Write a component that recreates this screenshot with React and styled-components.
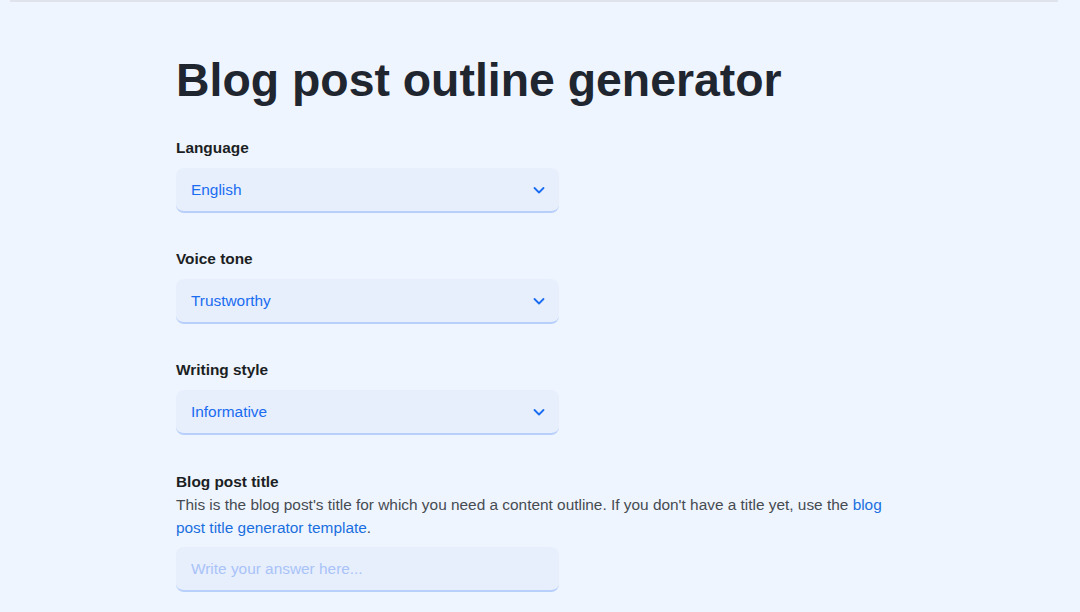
import styled, { createGlobalStyle } from 'styled-components'

const GlobalStyle = createGlobalStyle`
  html, body {
    margin: 0;
    padding: 0;
    background: #eff5fe;
  }
  body {
    font-family: "Liberation Sans", Arial, sans-serif;
    color: #1d232b;
  }
`

const Page = styled.div`
  min-height: 612px;
  background: #eff5fe;
  border-top: 2px solid #dfe4ec;
  margin: 0 22px 0 10px;
`

const Main = styled.main`
  width: 720px;
  margin-left: 166px;
  padding-top: 51px;
`

const Title = styled.h1`
  margin: 0 0 31px;
  font-size: 46.4px;
  line-height: 54px;
  font-weight: 700;
  color: #1f2630;
`

const Field = styled.div`
  padding-top: ${p => (p.$gap ? '1px' : '0')};
  margin-bottom: 36px;
`

const Label = styled.div`
  font-size: 15.4px;
  line-height: 20px;
  font-weight: 700;
  color: #1b1f24;
  margin-bottom: ${p => (p.$tight ? '1px' : '10px')};
`

const Help = styled.p`
  margin: 0 0 8px;
  font-size: 15.4px;
  line-height: 23px;
  color: #464b52;
  a {
    color: #1a6fe0;
    text-decoration: none;
  }
`

const SelectBox = styled.div`
  width: 383px;
  height: 45px;
  box-sizing: border-box;
  display: flex;
  align-items: center;
  justify-content: space-between;
  padding: 0 13px 0 15px;
  background: #e7effd;
  border-radius: 8px;
  border-bottom: 2px solid #b7cffa;
  font-size: 15.4px;
  color: ${p => (p.$placeholder ? '#a9c3f7' : '#1a6cf0')};
`

const Chevron = () => (
  <svg width="14" height="14" viewBox="0 0 14 14" fill="none">
    <path d="M2.5 5l4.5 4.5L11.5 5" stroke="#1a6cf0" strokeWidth="1.8" strokeLinecap="round" strokeLinejoin="round" />
  </svg>
)

const selects = [
  { label: 'Language', value: 'English' },
  { label: 'Voice tone', value: 'Trustworthy' },
  { label: 'Writing style', value: 'Informative' },
]

export default function App () {
  return (
    <>
      <GlobalStyle />
      <Page>
        <Main>
          <Title>Blog post outline generator</Title>
          {selects.map(s => (
            <Field key={s.label}>
              <Label>{s.label}</Label>
              <SelectBox>
                <span>{s.value}</span>
                <Chevron />
              </SelectBox>
            </Field>
          ))}
          <Field $gap>
            <Label $tight>Blog post title</Label>
            <Help>
              This is the blog post's title for which you need a content outline. If you don't have a title yet, use the{' '}
              <a href="#">blog post title generator template</a>.
            </Help>
            <SelectBox $placeholder>Write your answer here...</SelectBox>
          </Field>
        </Main>
      </Page>
    </>
  )
}
